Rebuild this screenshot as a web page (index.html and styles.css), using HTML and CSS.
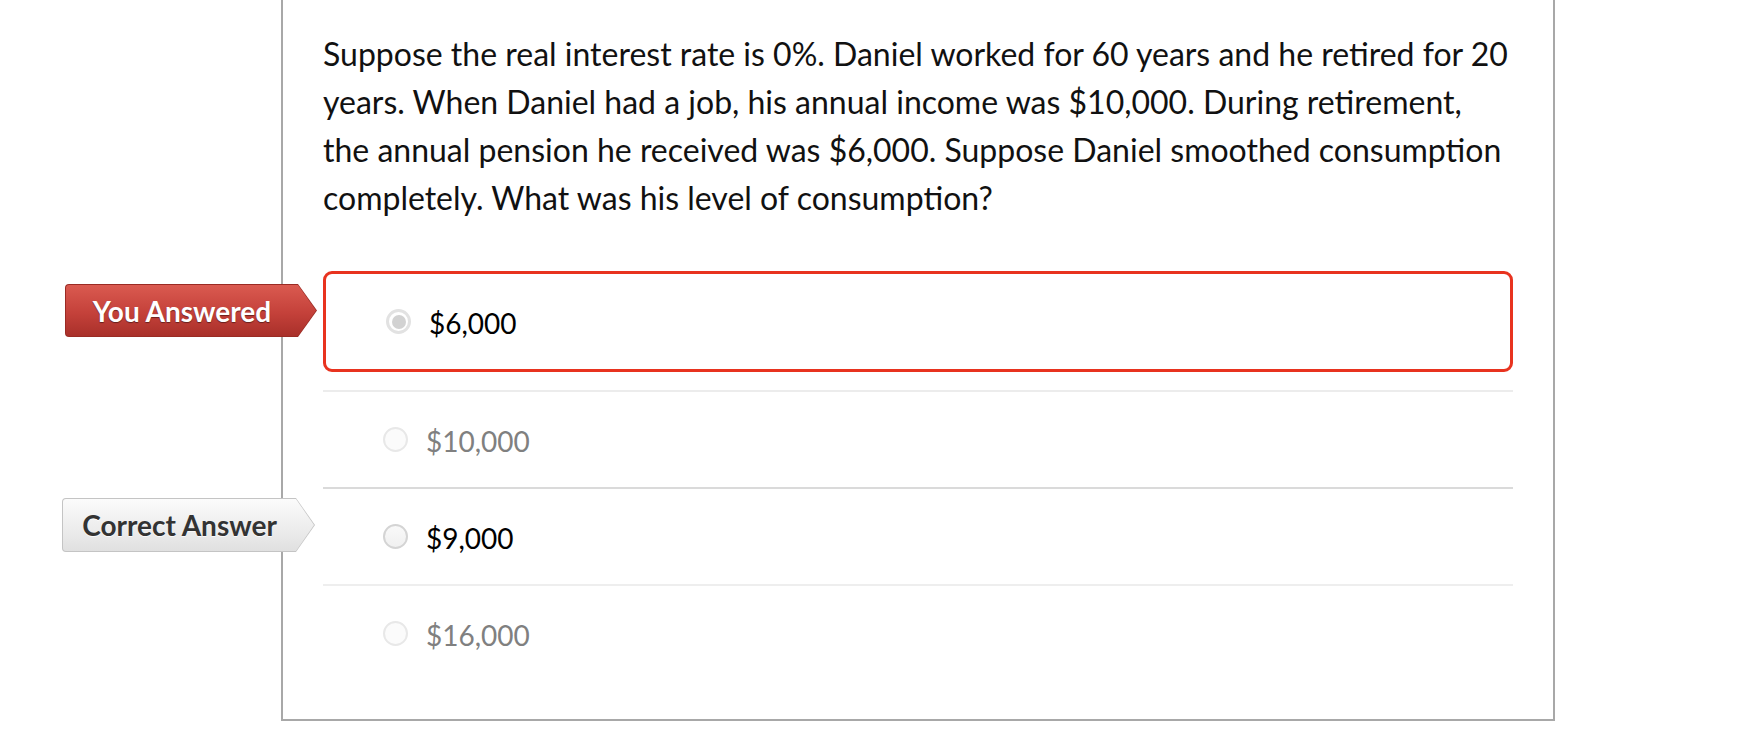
FILE: index.html
```html
<!DOCTYPE html>
<html lang="en">
<head>
<meta charset="utf-8">
<title>Quiz question</title>
<link rel="stylesheet" href="styles.css">
</head>
<body>
<div class="quiz">
  <div class="question">Suppose the real interest rate is 0%. Daniel worked for 60 years and he retired for 20<br>years. When Daniel had a job, his annual income was $10,000. During retirement,<br>the annual pension he received was $6,000. Suppose Daniel smoothed consumption<br>completely. What was his level of consumption?</div>
  <div class="answers">
    <div class="answer answer-selected">
      <div class="tag tag-you"><div class="tag-inner">You Answered</div></div>
      <span class="radio radio-checked"></span>
      <span class="answer-text">$6,000</span>
    </div>
    <div class="answer answer-row answer-faded">
      <span class="radio"></span>
      <span class="answer-text">$10,000</span>
    </div>
    <div class="answer answer-row answer-correct">
      <div class="tag tag-correct"><div class="tag-inner">Correct Answer</div></div>
      <span class="radio"></span>
      <span class="answer-text">$9,000</span>
    </div>
    <div class="answer answer-row answer-faded answer-last">
      <span class="radio"></span>
      <span class="answer-text">$16,000</span>
    </div>
  </div>
</div>
</body>
</html>
```

FILE: styles.css
```css
html, body {
  margin: 0;
  padding: 0;
  background: #ffffff;
}

body {
  font-family: Lato, "Open Sans", "Liberation Sans", sans-serif;
  color: #000;
}

.quiz {
  box-sizing: border-box;
  margin-left: 281px;
  width: 1274px;
  border: 2px solid #a8a8a8;
  border-top: none;
  padding: 30px 40px 38px 40px;
}

.question {
  font-size: 32px;
  line-height: 48px;
  color: #111;
  white-space: nowrap;
}

.answers {
  margin-top: 49px;
}

.answer {
  position: relative;
  display: flex;
  align-items: center;
  height: 95px;
  padding-left: 60px;
  font-size: 28px;
}

.answer-selected {
  border: 3px solid #e8331f;
  border-radius: 9px;
  padding-left: 60px;
  margin-bottom: 18px;
}

.answer-row {
  border-top: 2px solid #ececec;
}

.answer-correct {
  border-top-color: #dadada;
}

.answer-last {
  border-top-color: #eeeeee;
}

.radio {
  box-sizing: border-box;
  width: 25px;
  height: 25px;
  border-radius: 50%;
  border: 2px solid #d4d4d4;
  background: linear-gradient(#f9f9f9, #f0f0f0);
  margin-right: 18px;
  flex: none;
  display: flex;
  align-items: center;
  justify-content: center;
}

.answer-faded .radio {
  border-color: #e8e8e8;
  background: #fbfbfb;
}

.radio-checked {
  border: 3px solid #e2e2e2;
  background: #fff;
}

.radio-checked::after {
  content: "";
  width: 14px;
  height: 14px;
  border-radius: 50%;
  background: #d2d2d2;
}

.answer-text {
  color: #000;
  position: relative;
  top: 1px;
}

.answer-faded .answer-text {
  color: #808080;
}

/* Tags */
.tag {
  position: absolute;
  box-sizing: border-box;
  width: 252px;
  height: 53px;
  padding: 1px;
  border-radius: 4px 0 0 4px;
  clip-path: polygon(0 0, calc(100% - 19px) 0, 100% 50%, calc(100% - 19px) 100%, 0 100%);
}

.tag-inner {
  box-sizing: border-box;
  height: 100%;
  border-radius: 3px 0 0 3px;
  clip-path: polygon(0 0, calc(100% - 18px) 0, 100% 50%, calc(100% - 18px) 100%, 0 100%);
  display: flex;
  align-items: center;
  justify-content: center;
  padding-right: 18px;
  font-weight: 700;
  font-size: 28px;
}

.tag-you {
  left: -261px;
  top: 10px;
  background: #9a2b24;
}

.tag-you .tag-inner {
  background: linear-gradient(#da5a50, #c4413a 55%, #a9302a);
  color: #fff;
  text-shadow: 0 1px 1px rgba(0, 0, 0, 0.45);
}

.tag-correct {
  left: -261px;
  top: 9px;
  width: 253px;
  height: 54px;
  background: #c4c4c4;
}

.tag-correct .tag-inner {
  background: linear-gradient(#fbfbfb, #ececec 60%, #e0e0e0);
  color: #333;
  text-shadow: 0 1px 0 rgba(255, 255, 255, 0.8);
}
```
